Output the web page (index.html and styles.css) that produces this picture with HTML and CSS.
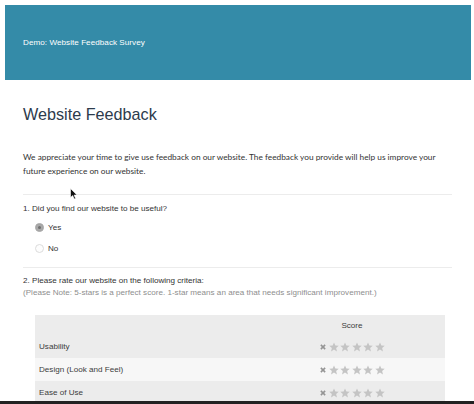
FILE: index.html
```html
<!DOCTYPE html>
<html lang="en">
<head>
<meta charset="utf-8">
<title>Website Feedback</title>
<link rel="stylesheet" href="styles.css">
</head>
<body>
<header class="banner">
  <span class="banner-title">Demo: Website Feedback Survey</span>
</header>
<main class="content">
  <h1 class="title">Website Feedback</h1>
  <p class="intro">We appreciate your time to give use feedback on our website. The feedback you provide will help us improve your future experience on our website.</p>
  <hr class="sep sep-first">
  <section class="question">
    <div class="q-label">1. Did you find our website to be useful?</div>
    <div class="options">
      <label class="option"><span class="radio radio-on"></span><span>Yes</span></label>
      <label class="option"><span class="radio"></span><span>No</span></label>
    </div>
  </section>
  <hr class="sep sep-second">
  <section class="question">
    <div class="q-label q2">2. Please rate our website on the following criteria:</div>
    <div class="q-note">(Please Note: 5-stars is a perfect score. 1-star means an area that needs significant improvement.)</div>
    <div class="grid">
      <div class="grid-row grid-head">
        <div class="cell-label"></div>
        <div class="cell-score">Score</div>
      </div>
      <div class="grid-row row-dark">
        <div class="cell-label">Usability</div>
        <div class="cell-score"><span class="rating">
          <svg class="clear" viewBox="0 0 7 7"><path d="M1 1L6 6M6 1L1 6"/></svg>
          <svg class="star" viewBox="0 0 10 10"><polygon points="5,0.4 6.35,3.55 9.7,3.8 7.15,6 7.95,9.4 5,7.6 2.05,9.4 2.85,6 0.3,3.8 3.65,3.55"/></svg>
          <svg class="star" viewBox="0 0 10 10"><polygon points="5,0.4 6.35,3.55 9.7,3.8 7.15,6 7.95,9.4 5,7.6 2.05,9.4 2.85,6 0.3,3.8 3.65,3.55"/></svg>
          <svg class="star" viewBox="0 0 10 10"><polygon points="5,0.4 6.35,3.55 9.7,3.8 7.15,6 7.95,9.4 5,7.6 2.05,9.4 2.85,6 0.3,3.8 3.65,3.55"/></svg>
          <svg class="star" viewBox="0 0 10 10"><polygon points="5,0.4 6.35,3.55 9.7,3.8 7.15,6 7.95,9.4 5,7.6 2.05,9.4 2.85,6 0.3,3.8 3.65,3.55"/></svg>
          <svg class="star" viewBox="0 0 10 10"><polygon points="5,0.4 6.35,3.55 9.7,3.8 7.15,6 7.95,9.4 5,7.6 2.05,9.4 2.85,6 0.3,3.8 3.65,3.55"/></svg>
        </span></div>
      </div>
      <div class="grid-row row-light">
        <div class="cell-label">Design (Look and Feel)</div>
        <div class="cell-score"><span class="rating">
          <svg class="clear" viewBox="0 0 7 7"><path d="M1 1L6 6M6 1L1 6"/></svg>
          <svg class="star" viewBox="0 0 10 10"><polygon points="5,0.4 6.35,3.55 9.7,3.8 7.15,6 7.95,9.4 5,7.6 2.05,9.4 2.85,6 0.3,3.8 3.65,3.55"/></svg>
          <svg class="star" viewBox="0 0 10 10"><polygon points="5,0.4 6.35,3.55 9.7,3.8 7.15,6 7.95,9.4 5,7.6 2.05,9.4 2.85,6 0.3,3.8 3.65,3.55"/></svg>
          <svg class="star" viewBox="0 0 10 10"><polygon points="5,0.4 6.35,3.55 9.7,3.8 7.15,6 7.95,9.4 5,7.6 2.05,9.4 2.85,6 0.3,3.8 3.65,3.55"/></svg>
          <svg class="star" viewBox="0 0 10 10"><polygon points="5,0.4 6.35,3.55 9.7,3.8 7.15,6 7.95,9.4 5,7.6 2.05,9.4 2.85,6 0.3,3.8 3.65,3.55"/></svg>
          <svg class="star" viewBox="0 0 10 10"><polygon points="5,0.4 6.35,3.55 9.7,3.8 7.15,6 7.95,9.4 5,7.6 2.05,9.4 2.85,6 0.3,3.8 3.65,3.55"/></svg>
        </span></div>
      </div>
      <div class="grid-row row-dark">
        <div class="cell-label">Ease of Use</div>
        <div class="cell-score"><span class="rating">
          <svg class="clear" viewBox="0 0 7 7"><path d="M1 1L6 6M6 1L1 6"/></svg>
          <svg class="star" viewBox="0 0 10 10"><polygon points="5,0.4 6.35,3.55 9.7,3.8 7.15,6 7.95,9.4 5,7.6 2.05,9.4 2.85,6 0.3,3.8 3.65,3.55"/></svg>
          <svg class="star" viewBox="0 0 10 10"><polygon points="5,0.4 6.35,3.55 9.7,3.8 7.15,6 7.95,9.4 5,7.6 2.05,9.4 2.85,6 0.3,3.8 3.65,3.55"/></svg>
          <svg class="star" viewBox="0 0 10 10"><polygon points="5,0.4 6.35,3.55 9.7,3.8 7.15,6 7.95,9.4 5,7.6 2.05,9.4 2.85,6 0.3,3.8 3.65,3.55"/></svg>
          <svg class="star" viewBox="0 0 10 10"><polygon points="5,0.4 6.35,3.55 9.7,3.8 7.15,6 7.95,9.4 5,7.6 2.05,9.4 2.85,6 0.3,3.8 3.65,3.55"/></svg>
          <svg class="star" viewBox="0 0 10 10"><polygon points="5,0.4 6.35,3.55 9.7,3.8 7.15,6 7.95,9.4 5,7.6 2.05,9.4 2.85,6 0.3,3.8 3.65,3.55"/></svg>
        </span></div>
      </div>
    </div>
  </section>
</main>
<svg class="cursor" viewBox="0 0 8 12"><path d="M0.5 0.5L0.5 9.5L2.7 7.6L4.2 11L5.6 10.4L4.1 7.1L7 7.1Z"/></svg>
<div class="bottom-bar"></div>
</body>
</html>
```
FILE: styles.css
```css
html, body {
  margin: 0;
  padding: 0;
  background: #ffffff;
  overflow: hidden;
}

body {
  width: 474px;
  height: 404px;
  font-family: "Liberation Sans", Arial, sans-serif;
  color: #333333;
}

.banner {
  margin: 5px 3px 0 5px;
  height: 75px;
  background: #348ba8;
  display: flex;
  align-items: center;
  padding-left: 18px;
  box-sizing: border-box;
}

.banner-title {
  color: #ffffff;
  font-size: 8.1px;
  letter-spacing: 0.05px;
}

.content {
  padding: 0 22px 0 23px;
}

.title {
  margin: 24px 0 0 0;
  font-size: 16.2px;
  line-height: 20px;
  font-weight: normal;
  color: #2d3b4c;
}

.intro {
  margin: 26px 0 0 0;
  font-family: Lato, "Liberation Sans", sans-serif;
  font-size: 8.3px;
  line-height: 14px;
  color: #333333;
}

.sep {
  border: 0;
  border-top: 1px solid #ececec;
  margin: 0;
  height: 0;
}

.sep-first {
  margin-top: 16px;
}

.sep-second {
  margin-top: 8px;
}

.q-label {
  margin-top: 7px;
  font-size: 8.1px;
  line-height: 14px;
  color: #333333;
}

.q2 {
  margin-top: 6px;
  line-height: 13px;
}

.q-note {
  font-size: 8.1px;
  line-height: 12px;
  color: #8e8e8e;
}

.options {
  display: flex;
  flex-direction: column;
  padding-left: 12px;
  margin-top: 1px;
}

.option {
  height: 21px;
  display: flex;
  align-items: center;
  gap: 4px;
  font-size: 8.1px;
  color: #333333;
}

.radio {
  width: 7px;
  height: 7px;
  border-radius: 50%;
  border: 1px solid #dcdcdc;
  background: #fdfdfd;
  box-sizing: content-box;
}

.radio-on {
  background: #6f6f6f;
  border-color: #b5b5b5;
  box-shadow: inset 0 0 0 2px #a9a9a9;
}

.grid {
  margin: 16px 0 0 12px;
  width: 410px;
  display: flex;
  flex-direction: column;
}

.grid-row {
  display: grid;
  grid-template-columns: 224px 186px;
  align-items: center;
  height: 23px;
  font-size: 8.1px;
  color: #3c3c3c;
}

.grid-head {
  height: 20px;
  background: #ececec;
}

.row-dark {
  background: #ececec;
}

.row-light {
  background: #f7f7f7;
}

.cell-label {
  padding-left: 4px;
}

.cell-score {
  display: flex;
  justify-content: center;
  align-items: center;
}

.rating {
  display: flex;
  align-items: center;
  gap: 1.5px;
}

.clear {
  width: 6px;
  height: 6px;
  fill: none;
  stroke: #959595;
  stroke-width: 1.8;
  margin-right: 1.5px;
}

.star {
  width: 10px;
  height: 10px;
  fill: #c4c4c4;
}

.cursor {
  position: absolute;
  left: 70px;
  top: 188px;
  width: 8px;
  height: 12px;
  fill: #111111;
  stroke: #ffffff;
  stroke-width: 0.6;
}

.bottom-bar {
  position: fixed;
  left: 0;
  right: 0;
  bottom: 0;
  height: 3px;
  background: #222222;
}
```
